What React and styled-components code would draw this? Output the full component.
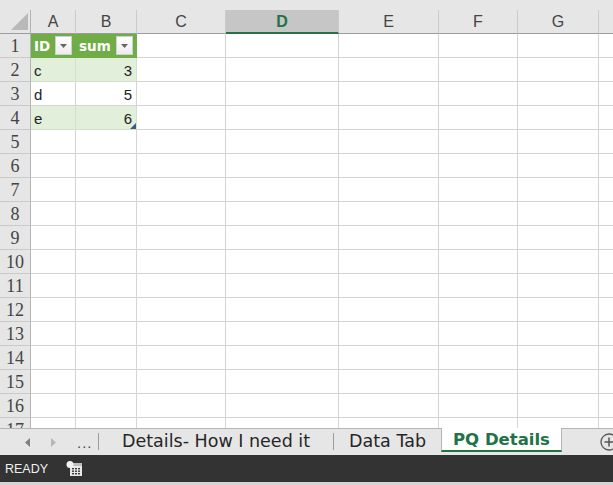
import React from 'react';
import styled, { createGlobalStyle } from 'styled-components';

const GlobalStyle = createGlobalStyle`
  html, body {
    margin: 0;
    padding: 0;
    background: #ffffff;
    overflow: hidden;
  }
  * {
    box-sizing: border-box;
  }
`;

// H is only a sliver at the right edge, its letter sits off screen
const columns = [
  { key: 'A', label: 'A', width: 45 },
  { key: 'B', label: 'B', width: 61 },
  { key: 'C', label: 'C', width: 89 },
  { key: 'D', label: 'D', width: 113, selected: true },
  { key: 'E', label: 'E', width: 100 },
  { key: 'F', label: 'F', width: 79 },
  { key: 'G', label: 'G', width: 81 },
  { key: 'H', label: '', width: 80 },
];

// table data lives in A1:B4
const tableRows = [
  { id: 'c', sum: 3 },
  { id: 'd', sum: 5 },
  { id: 'e', sum: 6 },
];

const rowNumbers = Array.from({ length: 17 }, (_, i) => i + 1);

const App = () => {
  const template = `31px ${columns.map(c => `${c.width}px`).join(' ')}`;

  const renderCell = (row, col) => {
    if (row === 1 && (col.key === 'A' || col.key === 'B')) {
      return (
        <HeaderCell key={col.key}>
          <HeaderLabel>{col.key === 'A' ? 'ID' : 'sum'}</HeaderLabel>
          <FilterButton>
            <svg width="7" height="4" viewBox="0 0 7 4">
              <path d="M0 0 H7 L3.5 4 Z" fill="#666" />
            </svg>
          </FilterButton>
        </HeaderCell>
      );
    }
    if (row >= 2 && row <= 4 && (col.key === 'A' || col.key === 'B')) {
      const data = tableRows[row - 2];
      const banded = row % 2 === 0;
      return (
        <DataCell key={col.key} $banded={banded} $number={col.key === 'B'}>
          {col.key === 'A' ? data.id : data.sum}
          {row === 4 && col.key === 'B' && <ResizeHandle />}
        </DataCell>
      );
    }
    return <Cell key={col.key} />;
  };

  return (
    <Window>
      <GlobalStyle />
      <TopStrip />
      <Sheet style={{ gridTemplateColumns: template }}>
        <Corner>
          <svg width="17" height="17" viewBox="0 0 17 17">
            <path d="M17 0 V17 H0 Z" fill="#b9b9b9" />
          </svg>
        </Corner>
        {columns.map(col => (
          <ColHeader key={col.key} $selected={col.selected}>
            {col.label}
          </ColHeader>
        ))}
        {rowNumbers.map(row => (
          <React.Fragment key={row}>
            <RowHeader>{row}</RowHeader>
            {columns.map(col => renderCell(row, col))}
          </React.Fragment>
        ))}
      </Sheet>

      <TabBar>
        <TabNav>
          <NavArrow>
            <svg width="5" height="9" viewBox="0 0 5 9">
              <path d="M5 0 V9 L0 4.5 Z" fill="#808080" />
            </svg>
          </NavArrow>
          <NavArrow>
            <svg width="5" height="9" viewBox="0 0 5 9">
              <path d="M0 0 V9 L5 4.5 Z" fill="#b8b8b8" />
            </svg>
          </NavArrow>
          <Ellipsis>...</Ellipsis>
        </TabNav>
        <Separator />
        <Tab $pad={23}>Details- How I need it</Tab>
        <Separator />
        <Tab $pad={15}>Data Tab</Tab>
        <ActiveTab>PQ Details</ActiveTab>
        <AddSheet>
          <svg width="18" height="18" viewBox="0 0 18 18">
            <circle cx="9" cy="9" r="8" fill="none" stroke="#555" strokeWidth="1.3" />
            <path d="M9 4.5 V13.5 M4.5 9 H13.5" stroke="#555" strokeWidth="1.5" />
          </svg>
        </AddSheet>
      </TabBar>

      <StatusBar>
        <StatusText>READY</StatusText>
        <StatusIcon>
          <svg width="17" height="16" viewBox="0 0 17 16">
            <rect x="4" y="2" width="12" height="13" fill="#e8e8e8" />
            <rect x="4" y="2" width="12" height="3" fill="#bdbdbd" />
            <g fill="#3a3a3a">
              <rect x="6" y="7" width="2" height="1.4" />
              <rect x="9" y="7" width="2" height="1.4" />
              <rect x="12" y="7" width="2" height="1.4" />
              <rect x="6" y="9.5" width="2" height="1.4" />
              <rect x="9" y="9.5" width="2" height="1.4" />
              <rect x="12" y="9.5" width="2" height="1.4" />
              <rect x="6" y="12" width="2" height="1.4" />
              <rect x="9" y="12" width="2" height="1.4" />
              <rect x="12" y="12" width="2" height="1.4" />
            </g>
            <circle cx="4" cy="3.5" r="3.5" fill="#f2f2f2" />
          </svg>
        </StatusIcon>
      </StatusBar>
      <BottomStrip />
    </Window>
  );
};

// Styled Components
const Window = styled.div`
  width: 613px;
  height: 485px;
  display: flex;
  flex-direction: column;
  background: #ffffff;
  overflow: hidden;
`;

const TopStrip = styled.div`
  height: 10px;
  flex: none;
  background: #e6e6e6;
`;

const Sheet = styled.div`
  display: grid;
  grid-auto-rows: 24px;
  height: 418px;
  flex: none;
  overflow: hidden;
  font-family: "Liberation Sans", Arial, sans-serif;
`;

const Corner = styled.div`
  background: #e6e6e6;
  border-right: 1px solid #b4b4b4;
  border-bottom: 1px solid #9c9c9c;
  display: flex;
  align-items: flex-end;
  justify-content: flex-end;
  padding: 0 2px 3px 0;
`;

const ColHeader = styled.div`
  display: flex;
  align-items: center;
  justify-content: center;
  background: ${p => (p.$selected ? '#c6c6c6' : '#e6e6e6')};
  color: ${p => (p.$selected ? '#217346' : '#444444')};
  font-weight: ${p => (p.$selected ? 700 : 400)};
  font-size: 16px;
  border-right: 1px solid #cacaca;
  border-bottom: ${p => (p.$selected ? '2px solid #217346' : '1px solid #9c9c9c')};
  padding-top: ${p => (p.$selected ? '1px' : '0')};
`;

const RowHeader = styled.div`
  display: flex;
  align-items: center;
  justify-content: center;
  background: #e6e6e6;
  color: #444444;
  font-family: "Liberation Serif", "DejaVu Serif", serif;
  font-size: 18px;
  border-right: 1px solid #b4b4b4;
  border-bottom: 1px solid #cacaca;
  padding-top: 1px;
`;

const Cell = styled.div`
  border-right: 1px solid #d4d4d4;
  border-bottom: 1px solid #d4d4d4;
`;

const HeaderCell = styled.div`
  display: flex;
  align-items: center;
  justify-content: space-between;
  background: #70ad47;
  padding: 0 3px 0 3px;
  border-bottom: 1px solid #70ad47;
  border-right: 1px solid #70ad47;
`;

const HeaderLabel = styled.span`
  color: #ffffff;
  font-family: "DejaVu Sans", Verdana, sans-serif;
  font-weight: 700;
  font-size: 13.5px;
`;

const FilterButton = styled.div`
  width: 17px;
  height: 19px;
  display: flex;
  align-items: center;
  justify-content: center;
  background: linear-gradient(#ffffff, #ececec);
  border: 1px solid #cfcfcf;
`;

const DataCell = styled.div`
  position: relative;
  display: flex;
  align-items: center;
  justify-content: ${p => (p.$number ? 'flex-end' : 'flex-start')};
  padding: 2px 4px 0 3px;
  background: ${p => (p.$banded ? '#e2efda' : '#ffffff')};
  color: #222222;
  font-size: 15px;
  border-right: 1px solid ${p => (p.$banded ? '#d2dfca' : '#d4d4d4')};
  border-bottom: 1px solid ${p => (p.$banded ? '#d2dfca' : '#d4d4d4')};
`;

const ResizeHandle = styled.span`
  position: absolute;
  right: 0;
  bottom: 0;
  width: 0;
  height: 0;
  border-left: 6px solid transparent;
  border-bottom: 6px solid #3f5a86;
`;

const TabBar = styled.div`
  height: 27px;
  flex: none;
  display: flex;
  align-items: stretch;
  background: #e6e6e6;
  border-top: 1px solid #b4b4b4;
  font-family: "DejaVu Sans", Verdana, sans-serif;
  font-size: 17.5px;
  color: #262626;
`;

const TabNav = styled.div`
  width: 98px;
  display: flex;
  align-items: center;
  padding-left: 25px;
`;

const NavArrow = styled.div`
  width: 26px;
  display: flex;
  align-items: center;
`;

const Ellipsis = styled.span`
  color: #404040;
  font-size: 13px;
  letter-spacing: 1px;
  padding-top: 3px;
`;

const Separator = styled.div`
  width: 1px;
  margin: 4px 0 5px;
  background: #9c9c9c;
`;

const Tab = styled.div`
  display: flex;
  align-items: center;
  padding: 0 ${p => p.$pad}px 2px;
  white-space: nowrap;
`;

const ActiveTab = styled.div`
  display: flex;
  align-items: center;
  margin-top: -1px;
  margin-bottom: 3px;
  padding: 1px 11px 0;
  background: #ffffff;
  border-left: 1px solid #b4b4b4;
  border-right: 1px solid #b4b4b4;
  border-bottom: 2px solid #217346;
  color: #217346;
  font-size: 16.5px;
  font-weight: 700;
  white-space: nowrap;
`;

const AddSheet = styled.div`
  flex: 1;
  display: flex;
  align-items: center;
  justify-content: flex-end;
  margin-right: -5px;
`;

const StatusBar = styled.div`
  height: 27px;
  flex: none;
  display: flex;
  align-items: center;
  gap: 18px;
  padding-left: 5px;
  background: #333333;
`;

const StatusText = styled.span`
  color: #f0f0f0;
  font-family: "Liberation Sans", Arial, sans-serif;
  font-size: 12.5px;
`;

const StatusIcon = styled.div`
  display: flex;
  align-items: center;
`;

const BottomStrip = styled.div`
  flex: 1;
  background: #d6d6d6;
`;

export default App;
